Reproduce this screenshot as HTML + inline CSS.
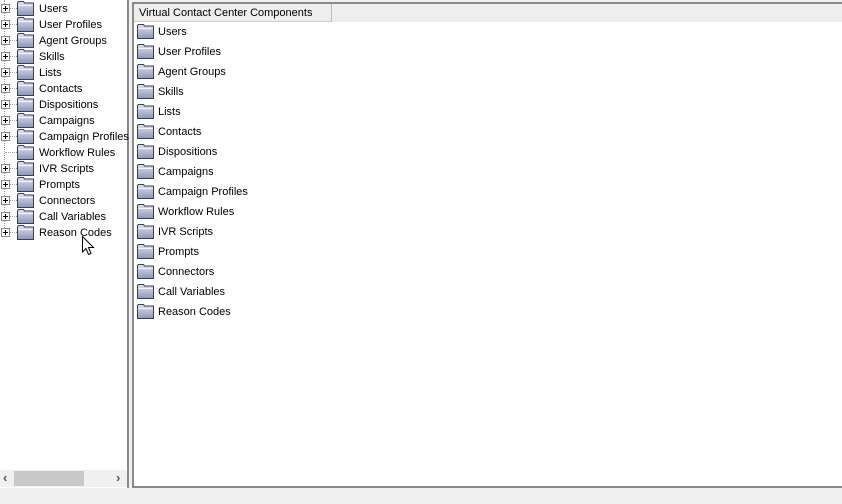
<!DOCTYPE html>
<html><head><style>
*{margin:0;padding:0;box-sizing:border-box}
body{width:842px;height:504px;overflow:hidden;background:#f0f0f0;font-family:"Liberation Sans",Tahoma,sans-serif;font-size:11px;color:#000;position:relative}
.a{position:absolute}
.lt{position:absolute;left:39px;line-height:16px;white-space:nowrap}
.rt{position:absolute;left:158px;line-height:20px;white-space:nowrap}
.exp{position:absolute;left:1px;width:9px;height:9px;border:1px solid #888;background:#fff}
.exp:before{content:"";position:absolute;left:1px;top:3px;width:5px;height:1px;background:#000}
.exp:after{content:"";position:absolute;left:3px;top:1px;width:1px;height:5px;background:#000}
.dh{position:absolute;left:10px;width:7px;border-top:1px dotted #999}
svg.f{position:absolute}
</style></head><body>
<svg width="0" height="0" style="position:absolute"><defs>
<linearGradient id="g" x1="0" y1="0" x2="0" y2="1"><stop offset="0" stop-color="#dfe3f0"/><stop offset="1" stop-color="#8e96b8"/></linearGradient>
<symbol id="fo" viewBox="0 0 18 15"><path d="M0.5 2.5 L0.5 1.5 L1.5 0.5 L6.5 0.5 L7.5 2 L16.5 2 L16.5 14.5 L0.5 14.5 Z" fill="url(#g)" stroke="#3a3f55"/><path d="M1.5 4.5 L15.5 4.5" stroke="#f2f4fa"/></symbol>
</defs></svg>
<div class="a" style="left:0;top:0;width:128px;height:488px;background:#fff"></div>
<div class="a" style="left:127px;top:0;width:2px;height:488px;background:#8a8a8a"></div>
<div class="a" style="left:4px;top:0;width:0;height:236px;border-left:1px dotted #999"></div>
<div class="a" style="left:0;top:470px;width:127px;height:17px;background:#f0f0f0"></div>
<div class="a" style="left:14px;top:471px;width:70px;height:15px;background:#c8c8c8"></div>
<div class="a" style="left:3px;top:470px;font-size:13px;color:#555;font-weight:bold">&lsaquo;</div>
<div class="a" style="left:116px;top:470px;font-size:13px;color:#555;font-weight:bold">&rsaquo;</div>
<div class="a" style="left:132px;top:2px;width:710px;height:486px;background:#fff;border-left:2px solid #8a8a8a;border-top:2px solid #8a8a8a;border-bottom:2px solid #8a8a8a"></div>
<div class="a" style="left:134px;top:4px;width:708px;height:18px;background:#eeeeee"></div>
<div class="a" style="left:134px;top:4px;width:198px;height:18px;border-right:1px solid #bbb;border-bottom:1px solid #ccc;padding-left:5px;line-height:19px">Virtual Contact Center Components</div>
<div id="L"></div>
<script>
var n=["Users","User Profiles","Agent Groups","Skills","Lists","Contacts","Dispositions","Campaigns","Campaign Profiles","Workflow Rules","IVR Scripts","Prompts","Connectors","Call Variables","Reason Codes"];
var h="";
n.forEach(function(t,i){var c=8+i*16;
if(t!="Workflow Rules")h+='<div class="exp" style="top:'+(c-4)+'px"></div>';
h+='<div class="dh" style="top:'+c+'px;left:'+(t=="Workflow Rules"?5:10)+'px;width:'+(t=="Workflow Rules"?12:7)+'px"></div>';
h+='<svg class="f" style="left:17px;top:'+(c-7)+'px" width="18" height="15"><use href="#fo"/></svg>';
h+='<div class="lt" style="top:'+(c-7)+'px">'+t+'</div>';
var r=31+i*20;
h+='<svg class="f" style="left:137px;top:'+(r-7)+'px" width="18" height="15"><use href="#fo"/></svg>';
h+='<div class="rt" style="top:'+(r-9)+'px">'+t+'</div>';
});
document.getElementById("L").innerHTML=h;
</script>
<svg class="a" style="left:82px;top:236px" width="13" height="20"><path d="M0.5 0.5 L0.5 16 L4 12.5 L6.5 18.5 L9 17.5 L6.5 11.5 L11.5 11.5 Z" fill="#fff" stroke="#000"/></svg>
</body></html>
